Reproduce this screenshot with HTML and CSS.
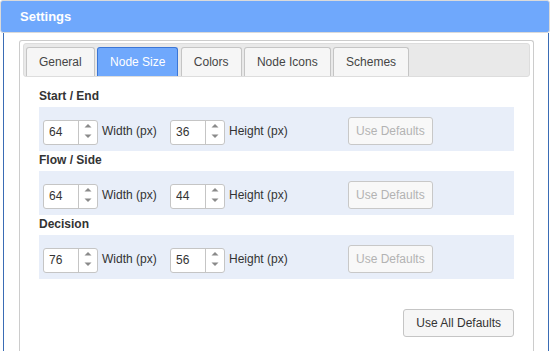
FILE: index.html
```html
<!DOCTYPE html>
<html>
<head>
<meta charset="utf-8">
<link rel="stylesheet" href="styles.css">
</head>
<body>
<div class="dialog">
  <div class="titlebar"><span class="title">Settings</span></div>
  <div class="content">
    <div class="tabs">
      <ul class="tabnav">
        <li class="tab">General</li>
        <li class="tab tab-active">Node Size</li>
        <li class="tab">Colors</li>
        <li class="tab">Node Icons</li>
        <li class="tab">Schemes</li>
      </ul>
      <div class="panel">
        <div class="group-label">Start / End</div>
        <div class="band">
          <span class="spinner"><input class="spin-input" type="text" value="64"><span class="spin-buttons"><svg width="18" height="23" viewBox="0 0 18 23"><path d="M5.5 6.5 L12.5 6.5 L9 3 Z" fill="#8a8a8a"/><path d="M5.5 13.5 L12.5 13.5 L9 17 Z" fill="#8a8a8a"/></svg></span></span>
          <span class="field-label label-w">Width (px)</span>
          <span class="spinner"><input class="spin-input" type="text" value="36"><span class="spin-buttons"><svg width="18" height="23" viewBox="0 0 18 23"><path d="M5.5 6.5 L12.5 6.5 L9 3 Z" fill="#8a8a8a"/><path d="M5.5 13.5 L12.5 13.5 L9 17 Z" fill="#8a8a8a"/></svg></span></span>
          <span class="field-label label-h">Height (px)</span>
          <button class="btn btn-disabled" disabled>Use Defaults</button>
        </div>
        <div class="group-label">Flow / Side</div>
        <div class="band">
          <span class="spinner"><input class="spin-input" type="text" value="64"><span class="spin-buttons"><svg width="18" height="23" viewBox="0 0 18 23"><path d="M5.5 6.5 L12.5 6.5 L9 3 Z" fill="#8a8a8a"/><path d="M5.5 13.5 L12.5 13.5 L9 17 Z" fill="#8a8a8a"/></svg></span></span>
          <span class="field-label label-w">Width (px)</span>
          <span class="spinner"><input class="spin-input" type="text" value="44"><span class="spin-buttons"><svg width="18" height="23" viewBox="0 0 18 23"><path d="M5.5 6.5 L12.5 6.5 L9 3 Z" fill="#8a8a8a"/><path d="M5.5 13.5 L12.5 13.5 L9 17 Z" fill="#8a8a8a"/></svg></span></span>
          <span class="field-label label-h">Height (px)</span>
          <button class="btn btn-disabled" disabled>Use Defaults</button>
        </div>
        <div class="group-label">Decision</div>
        <div class="band">
          <span class="spinner"><input class="spin-input" type="text" value="76"><span class="spin-buttons"><svg width="18" height="23" viewBox="0 0 18 23"><path d="M5.5 6.5 L12.5 6.5 L9 3 Z" fill="#8a8a8a"/><path d="M5.5 13.5 L12.5 13.5 L9 17 Z" fill="#8a8a8a"/></svg></span></span>
          <span class="field-label label-w">Width (px)</span>
          <span class="spinner"><input class="spin-input" type="text" value="56"><span class="spin-buttons"><svg width="18" height="23" viewBox="0 0 18 23"><path d="M5.5 6.5 L12.5 6.5 L9 3 Z" fill="#8a8a8a"/><path d="M5.5 13.5 L12.5 13.5 L9 17 Z" fill="#8a8a8a"/></svg></span></span>
          <span class="field-label label-h">Height (px)</span>
          <button class="btn btn-disabled" disabled>Use Defaults</button>
        </div>
        <div class="actions">
          <button class="btn btn-all">Use All Defaults</button>
        </div>
      </div>
    </div>
  </div>
</div>
</body>
</html>
```
FILE: styles.css
```css
html, body {
  margin: 0;
  padding: 0;
  background: #ffffff;
  overflow: hidden;
  height: 351px;
}
body {
  font-family: "Liberation Sans", Arial, sans-serif;
  font-size: 12px;
  color: #333333;
}
.dialog {
  width: 552px;
  height: 351px;
}
.titlebar {
  box-sizing: border-box;
  width: 550px;
  height: 33px;
  background: #6fa8fc;
  border: 1px solid #dadada;
  border-radius: 3px;
  padding: 1px 0 0 19px;
}
.title {
  display: block;
  color: #ffffff;
  font-weight: bold;
  font-size: 13px;
  line-height: 30px;
}
.content {
  box-sizing: border-box;
  margin: 0 3px 0 3px;
  border-left: 1px solid #3a6cb5;
  border-right: 1px solid #3a6cb5;
  padding: 7px 14px 0 15px;
  height: 318px;
}
.tabs {
  box-sizing: border-box;
  border: 1px solid #cccccc;
  border-bottom: 0;
  border-radius: 3px 3px 0 0;
  padding: 2px 3px 0 3px;
  height: 311px;
}
.tabnav {
  list-style: none;
  margin: 0;
  padding: 3px 2px 0 2px;
  display: flex;
  background: #e9e9e9;
  border: 1px solid #dddddd;
  border-radius: 3px;
}
.tab {
  box-sizing: border-box;
  height: 29px;
  padding: 7px 12px 0 12px;
  line-height: 14px;
  margin-right: 2.4px;
  border: 1px solid #c5c5c5;
  border-bottom: 0;
  border-radius: 3px 3px 0 0;
  background: #f6f6f6;
  color: #454545;
  white-space: nowrap;
}
.tab-active {
  background: #6fa8fc;
  border-color: #3b76d6;
  color: #ffffff;
}
.panel {
  padding: 10px 16px 0 16px;
}
.group-label {
  height: 20px;
  line-height: 18px;
  font-weight: bold;
  color: #333333;
}
.band {
  box-sizing: border-box;
  height: 44px;
  background: #e8eef9;
  display: flex;
  align-items: flex-end;
  padding: 0 0 6px 4px;
}
.spinner {
  box-sizing: border-box;
  display: flex;
  width: 55px;
  height: 25px;
  border: 1px solid #c5c5c5;
  border-radius: 3px;
  background: #ffffff;
}
.spin-input {
  box-sizing: border-box;
  width: 34px;
  height: 23px;
  border: 0;
  margin: 0;
  padding: 0 0 0 5px;
  font-family: "Liberation Sans", Arial, sans-serif;
  font-size: 12px;
  line-height: 23px;
  color: #333333;
  background: transparent;
  outline: none;
}
.spin-buttons {
  display: block;
  width: 18px;
  height: 23px;
  border-left: 1px solid #c5c5c5;
}
.spin-buttons svg {
  display: block;
}
.field-label {
  height: 28px;
  line-height: 28px;
  margin-left: 4px;
  color: #333333;
  white-space: nowrap;
}
.label-w {
  width: 68px;
}
.label-h {
  width: 119px;
}
.btn {
  box-sizing: border-box;
  height: 28px;
  border: 1px solid #c5c5c5;
  border-radius: 3px;
  background: #f6f6f6;
  font-family: "Liberation Sans", Arial, sans-serif;
  font-size: 12px;
  line-height: 26px;
  color: #333333;
  padding: 0 7px;
  margin: 0;
}
.btn-disabled {
  color: #b3b3b3;
  background: #f8f8f8;
  border-color: #c8c8c8;
}
.actions {
  display: flex;
  justify-content: flex-end;
  margin-top: 30px;
}
.btn-all {
  padding: 0 12px;
}
```
